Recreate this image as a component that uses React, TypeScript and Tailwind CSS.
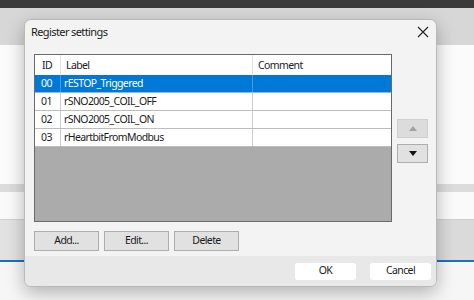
import React from "react";

const rows = [
  { id: "00", label: "rESTOP_Triggered", sel: true },
  { id: "01", label: "rSNO2005_COIL_OFF" },
  { id: "02", label: "rSNO2005_COIL_ON" },
  { id: "03", label: "rHeartbitFromModbus" },
];

const font = { fontFamily: '"Noto Sans", "Open Sans", sans-serif' };

export default function App() {
  return (
    <div className="relative w-[474px] h-[300px] overflow-hidden bg-white text-[#1b1b1b] tracking-[-0.6px]" style={font}>
      {/* background application */}
      <div className="flex flex-col h-full">
        <div className="h-[8px] bg-[#3a3a3a]" />
        <div className="h-[37px] bg-[#d7d7d7]" />
        <div className="h-[139px] bg-[#fbfbfb]" />
        <div className="h-[8px] bg-[#dcdcdc]" />
        <div className="h-[28px] bg-[#fafafa] border-b border-[#cfcfcf]" />
        <div className="h-[40px] bg-gradient-to-r from-[#e2e2e2] to-[#dadada]" />
        <div className="h-[2px] bg-[#1f6fc0]" />
        <div className="flex-1 bg-[#f6f6f6]" />
      </div>

      {/* dialog */}
      <div className="absolute left-[24px] top-[19px] w-[413px] h-[268px] rounded-[7px] border border-[#b9b9b9] bg-[#f3f3f3] shadow-[0_6px_18px_rgba(0,0,0,0.28)] flex flex-col overflow-hidden">
        {/* title */}
        <div className="h-[34px] flex items-start justify-between pl-[6px] pr-[6px] pt-[4px]">
          <span className="text-[11px] leading-[15px]">Register settings</span>
          <svg width="12" height="12" viewBox="0 0 12 12" className="mt-[2px] mr-[1px]">
            <path d="M1 1 L11 11 M11 1 L1 11" stroke="#222" strokeWidth="1.1" />
          </svg>
        </div>

        {/* body */}
        <div className="flex pl-[9px] gap-[5px]">
          <div className="w-[358px] h-[168px] border border-[#6a6a6a] bg-[#ababab] flex flex-col">
            <div className="flex h-[20px] bg-white text-[10.5px] leading-[20px]">
              <div className="w-[26px] pl-[7px] border-r border-[#e5e5e5]">ID</div>
              <div className="w-[192px] pl-[5px] border-r border-[#e5e5e5]">Label</div>
              <div className="flex-1 pl-[5px]">Comment</div>
            </div>
            {rows.map((r) => (
              <div
                key={r.id}
                className={
                  r.sel
                    ? "flex h-[18px] bg-[#0078d7] text-white text-[10.5px] leading-[17px] border-b border-[#8fb8de]"
                    : "flex h-[18px] bg-white text-[10.5px] leading-[17px] border-b border-[#bdbdbd]"
                }
              >
                <div className={r.sel ? "w-[26px] pl-[6px] border-r border-[#4c98dc]" : "w-[26px] pl-[6px] border-r border-[#cfcfcf]"}>{r.id}</div>
                <div className={r.sel ? "w-[192px] pl-[3px] border-r border-[#4c98dc]" : "w-[192px] pl-[3px] border-r border-[#cfcfcf]"}>{r.label}</div>
                <div className="flex-1" />
              </div>
            ))}
          </div>

          <div className="flex flex-col pt-[65px] gap-[6px]">
            <div className="w-[31px] h-[19px] bg-[#dcdcdc] border border-[#cfcfcf] flex items-center justify-center">
              <svg width="8" height="5" viewBox="0 0 8 5">
                <path d="M0 5 L4 0 L8 5 Z" fill="#a2a2a2" />
              </svg>
            </div>
            <div className="w-[31px] h-[19px] bg-[#e1e1e1] border border-[#adadad] flex items-center justify-center">
              <svg width="8" height="5" viewBox="0 0 8 5">
                <path d="M0 0 L8 0 L4 5 Z" fill="#111" />
              </svg>
            </div>
          </div>
        </div>

        {/* action buttons */}
        <div className="flex pl-[9px] pt-[9px] gap-[5px]">
          {["Add...", "Edit...", "Delete"].map((t) => (
            <div key={t} className="w-[65px] h-[20px] bg-[#e1e1e1] border border-[#adadad] flex items-center justify-center text-[10.5px]">
              {t}
            </div>
          ))}
        </div>

        {/* footer */}
        <div className="mt-auto h-[30px] bg-[#e8e8e8] flex items-center justify-end gap-[14px] pr-[5px]">
          <div className="w-[61px] h-[17px] bg-white rounded-[3px] flex items-center justify-center text-[10.5px]">OK</div>
          <div className="w-[61px] h-[17px] bg-white rounded-[3px] flex items-center justify-center text-[10.5px]">Cancel</div>
        </div>
      </div>
    </div>
  );
}
